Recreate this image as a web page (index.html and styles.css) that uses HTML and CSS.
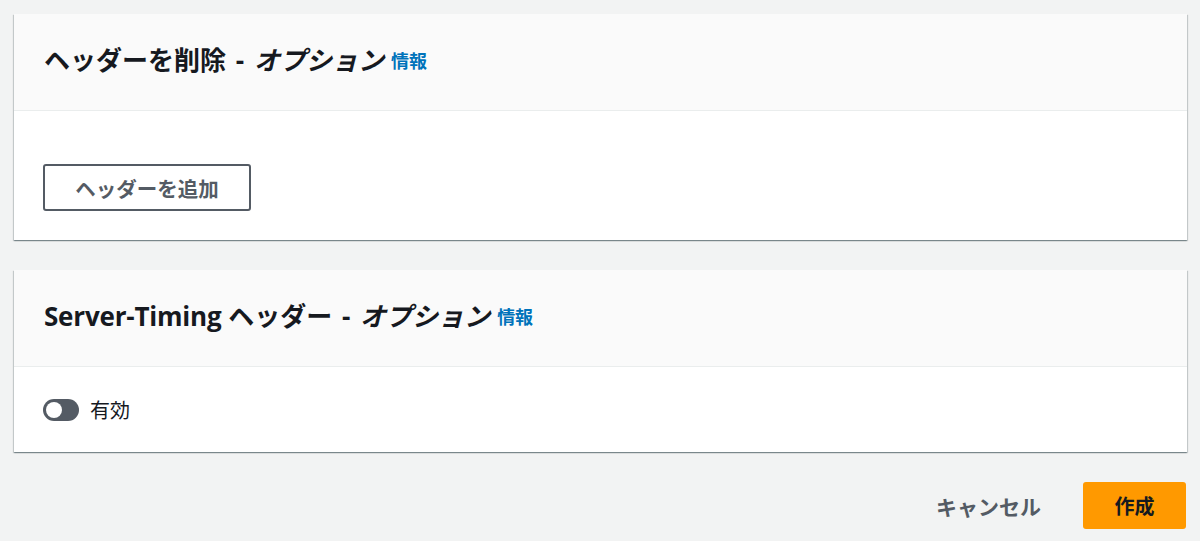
FILE: index.html
```html
<!DOCTYPE html>
<html lang="ja">
<head>
<meta charset="utf-8">
<link rel="stylesheet" href="styles.css">
</head>
<body>
<div class="page">
  <section class="card">
    <div class="card-header">
      <h2 class="title">ヘッダーを削除 <span class="dash">-</span> <em>オプション</em></h2>
      <a class="info">情報</a>
    </div>
    <div class="card-body body-headers">
      <button class="btn-normal">ヘッダーを追加</button>
    </div>
  </section>
  <section class="card">
    <div class="card-header">
      <h2 class="title"><span class="latin">Server-Timing</span> ヘッダー <span class="dash">-</span> <em>オプション</em></h2>
      <a class="info">情報</a>
    </div>
    <div class="card-body body-toggle">
      <label class="toggle-row">
        <span class="toggle"><span class="knob"></span></span>
        <span class="toggle-label">有効</span>
      </label>
    </div>
  </section>
  <div class="actions">
    <button class="btn-link">キャンセル</button>
    <button class="btn-primary">作成</button>
  </div>
</div>
</body>
</html>
```

FILE: styles.css
```css
html, body {
  margin: 0;
  padding: 0;
  background: #f2f3f3;
}
body {
  font-family: "Open Sans", "Noto Sans CJK JP", sans-serif;
  color: #16191f;
}
.page {
  padding: 14px 13px 0 14px;
  display: flex;
  flex-direction: column;
}
.card {
  background: #ffffff;
  box-shadow: 0 1px 1px 0 rgba(0, 28, 36, 0.3), 1px 1px 1px 0 rgba(0, 28, 36, 0.15), -1px 1px 1px 0 rgba(0, 28, 36, 0.15);
  margin-bottom: 30px;
}
.card-header {
  height: 97px;
  box-sizing: border-box;
  background: #fafafa;
  border-bottom: 1px solid #eaeded;
  display: flex;
  align-items: center;
  padding: 0 30px 4px;
}
.title {
  margin: 0;
  font-size: 26px;
  font-weight: 700;
  line-height: 30px;
  color: #16191f;
  white-space: nowrap;
}
.title .latin {
  letter-spacing: -0.2px;
}
.title .dash {
  display: inline-block;
  margin: 0 3px;
}
.title em {
  font-style: italic;
}
.info {
  margin-left: 7px;
  font-size: 18px;
  font-weight: 700;
  color: #0073bb;
  line-height: 30px;
  padding-top: 2px;
}
.body-headers {
  padding: 53px 29px 29px;
}
.btn-normal {
  display: block;
  width: 208px;
  height: 47px;
  box-sizing: border-box;
  border: 2px solid #545b64;
  border-radius: 3px;
  background: #ffffff;
  color: #545b64;
  font-family: "Open Sans", "Noto Sans CJK JP", sans-serif;
  font-size: 20.5px;
  font-weight: 700;
  padding: 0;
}
.body-toggle {
  height: 85px;
  box-sizing: border-box;
  padding: 0 29px;
  display: flex;
  align-items: center;
}
.toggle-row {
  display: flex;
  align-items: center;
}
.toggle {
  width: 36px;
  height: 22px;
  border-radius: 11px;
  background: #545b64;
  display: flex;
  align-items: center;
  padding-left: 3px;
  box-sizing: border-box;
}
.knob {
  width: 16px;
  height: 16px;
  border-radius: 50%;
  background: #ffffff;
}
.toggle-label {
  margin-left: 11px;
  font-size: 20px;
  color: #16191f;
}
.actions {
  display: flex;
  justify-content: flex-end;
  align-items: center;
  gap: 42px;
  padding-right: 1px;
}
.btn-link {
  background: none;
  border: none;
  padding: 0;
  font-family: "Open Sans", "Noto Sans CJK JP", sans-serif;
  font-size: 21px;
  font-weight: 700;
  color: #545b64;
}
.btn-primary {
  width: 103px;
  height: 47px;
  border: none;
  border-radius: 3px;
  background: #ff9900;
  color: #16191f;
  font-family: "Open Sans", "Noto Sans CJK JP", sans-serif;
  font-size: 20px;
  font-weight: 700;
  padding: 0;
}
```
